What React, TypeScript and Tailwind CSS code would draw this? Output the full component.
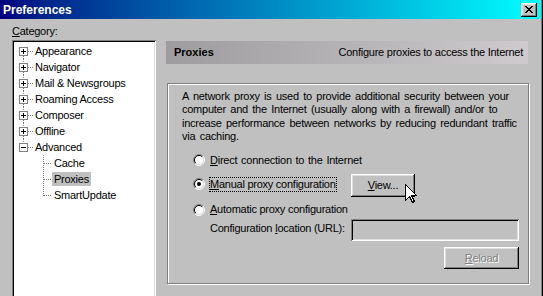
import React from 'react';

const bevelOut =
  'shadow-[inset_-1px_-1px_0_#000,inset_1px_1px_0_#fff,inset_-2px_-2px_0_#808080,inset_2px_2px_0_#dfdfdf]';
const bevelIn =
  'shadow-[inset_1px_1px_0_#808080,inset_-1px_-1px_0_#fff,inset_2px_2px_0_#000,inset_-2px_-2px_0_#dfdfdf]';

type Node = { label: string; level: 0 | 1; kind: 'plus' | 'minus' | 'leaf'; first?: boolean; last?: boolean; selected?: boolean };

const tree: Node[] = [
  { label: 'Appearance', level: 0, kind: 'plus', first: true },
  { label: 'Navigator', level: 0, kind: 'plus' },
  { label: 'Mail & Newsgroups', level: 0, kind: 'plus' },
  { label: 'Roaming Access', level: 0, kind: 'plus' },
  { label: 'Composer', level: 0, kind: 'plus' },
  { label: 'Offline', level: 0, kind: 'plus' },
  { label: 'Advanced', level: 0, kind: 'minus', last: true },
  { label: 'Cache', level: 1, kind: 'leaf' },
  { label: 'Proxies', level: 1, kind: 'leaf', selected: true },
  { label: 'SmartUpdate', level: 1, kind: 'leaf', last: true },
];

// pixel rows of the little close "X"
const closeX = ['11000011', '01100110', '00111100', '00011000', '00111100', '01100110', '11000011'];

function Gutter({ node }: { node: Node }) {
  if (node.level === 1) {
    return (
      <svg width="38" height="16" className="shrink-0" shapeRendering="crispEdges">
        <line x1="29.5" y1="0" x2="29.5" y2={node.last ? 9 : 16} stroke="#808080" strokeDasharray="1 1" />
        <line x1="30" y1="8.5" x2="38" y2="8.5" stroke="#808080" strokeDasharray="1 1" />
      </svg>
    );
  }
  return (
    <svg width="19" height="16" className="shrink-0" shapeRendering="crispEdges">
      {!node.first && <line x1="9.5" y1="0" x2="9.5" y2="4" stroke="#808080" strokeDasharray="1 1" />}
      {!node.last && <line x1="9.5" y1="13" x2="9.5" y2="16" stroke="#808080" strokeDasharray="1 1" />}
      <line x1="14" y1="8.5" x2="19" y2="8.5" stroke="#808080" strokeDasharray="1 1" />
      <rect x="5.5" y="4.5" width="8" height="8" fill="#fff" stroke="#808080" />
      <line x1="7" y1="8.5" x2="12" y2="8.5" stroke="#000" />
      {node.kind === 'plus' && <line x1="9.5" y1="6" x2="9.5" y2="11" stroke="#000" />}
    </svg>
  );
}

function Radio({ checked }: { checked?: boolean }) {
  return (
    <svg width="12" height="12" className="shrink-0">
      <circle cx="6" cy="6" r="4.5" fill="#fff" />
      <path d="M2.1,9.9 A5.5,5.5 0 0 1 9.9,2.1" fill="none" stroke="#808080" />
      <path d="M9.9,2.1 A5.5,5.5 0 0 1 2.1,9.9" fill="none" stroke="#fff" />
      <path d="M2.8,9.2 A4.5,4.5 0 0 1 9.2,2.8" fill="none" stroke="#000" />
      <path d="M9.2,2.8 A4.5,4.5 0 0 1 2.8,9.2" fill="none" stroke="#dfdfdf" />
      {checked && <circle cx="6" cy="6" r="2" fill="#000" />}
    </svg>
  );
}

function Cursor() {
  return (
    <svg width="13" height="20" viewBox="0 0 13 20" className="absolute left-[405px] top-[184px]" shapeRendering="crispEdges">
      <path d="M0.5,0.5 L0.5,16.5 L4.5,12.5 L7.5,18.5 L9.5,17.5 L6.5,11.5 L11.5,11.5 Z" fill="#fff" stroke="#000" />
    </svg>
  );
}

export default function App() {
  return (
    <div className="relative w-[543px] h-[296px] overflow-hidden bg-[#c0c0c0] pr-[2px] shadow-[inset_-1px_0_0_#000,inset_-2px_0_0_#808080] font-['Liberation_Sans',Arial,sans-serif] text-[11px] tracking-[-0.25px] text-black">
      <div className="flex h-[19px] items-center justify-between bg-gradient-to-r from-[#000080] to-[#00ffff] pl-[3px] pr-[4px]">
        <span className="text-[12px] font-bold tracking-normal text-white">Preferences</span>
        <button className={`flex h-[14px] w-[16px] items-center justify-center bg-[#c0c0c0] pb-[1px] ${bevelOut}`}>
          <svg width="8" height="7" shapeRendering="crispEdges">
            {closeX.map((row, y) =>
              row.split('').map((c, x) => (c === '1' ? <rect key={`${x}-${y}`} x={x} y={y} width="1" height="1" fill="#000" /> : null)),
            )}
          </svg>
        </button>
      </div>

      <div className="flex">
        {/* category tree */}
        <div className="ml-[12px] w-[144px] pt-[6px]">
          <div className="h-[13px] leading-[13px]">
            <span className="underline">C</span>ategory:
          </div>
          <div className={`mt-[2px] h-[280px] bg-white pt-[3px] pl-[2px] ${bevelIn}`}>
            {tree.map((node) => (
              <div key={node.label} className="flex h-[16px] items-center">
                <Gutter node={node} />
                <span className={`px-[2px] leading-[14px] whitespace-nowrap ${node.selected ? 'bg-[#c0c0c0]' : ''}`}>
                  {node.label}
                </span>
              </div>
            ))}
          </div>
        </div>

        {/* proxies panel */}
        <div className="ml-[10px] w-[364px] pt-[22px]">
          <div className="mr-[2px] flex h-[23px] items-center justify-between bg-gradient-to-r from-[#9e9c9e] to-[#cecace] pl-[8px] pr-[5px]">
            <span className="font-bold tracking-normal">Proxies</span>
            <span>Configure proxies to access the Internet</span>
          </div>

          <div className="mt-[19px] ml-[1px] w-[362px] border border-[#808080] pt-[6px] pb-[14px] pl-[14px] shadow-[inset_1px_1px_0_#fff,1px_1px_0_#fff]">
            <p className="leading-[13.3px] whitespace-nowrap [word-spacing:1.6px]">
              A network proxy is used to provide additional security between your
              <br />
              computer and the Internet (usually along with a firewall) and/or to
              <br />
              increase performance between networks by reducing redundant traffic
              <br />
              via caching.
            </p>

            <div className="mt-[6px] ml-[11px] w-[326px]">
              <div className="flex h-[22px] items-center gap-[4px]">
                <Radio />
                <span className="border border-transparent leading-[13px] [word-spacing:1px]">
                  <span className="underline">D</span>irect connection to the Internet
                </span>
              </div>

              <div className="flex h-[26px]">
                <div className="flex w-[158px] items-center gap-[4px]">
                  <Radio checked />
                  <span className="border border-dotted border-black leading-[13px]">
                    <span className="underline">M</span>anual proxy configuration
                  </span>
                </div>
                <button className={`self-end flex h-[23px] w-[64px] items-center justify-center bg-[#c0c0c0] ${bevelOut}`}>
                  <span>
                    <span className="underline">V</span>iew...
                  </span>
                </button>
              </div>

              <div className="flex h-[22px] items-center gap-[4px] pt-[3px]">
                <Radio />
                <span className="border border-transparent leading-[13px]">
                  <span className="underline">A</span>utomatic proxy configuration
                </span>
              </div>

              <div className="flex h-[22px]">
                <div className="flex w-[158px] items-center pl-[17px] pb-[3px]">
                  Configuration <span className="ml-[3px] underline">l</span>ocation (URL):
                </div>
                <div className={`h-[22px] w-[168px] bg-[#c0c0c0] ${bevelIn}`} />
              </div>

              <div className="mt-[6px] flex justify-end">
                <button className={`flex h-[22px] w-[75px] items-center justify-center bg-[#c0c0c0] text-[#808080] [text-shadow:1px_1px_0_#fff] ${bevelOut}`}>
                  <span>
                    <span className="underline">R</span>eload
                  </span>
                </button>
              </div>
            </div>
          </div>
        </div>
      </div>

      <Cursor />
    </div>
  );
}
